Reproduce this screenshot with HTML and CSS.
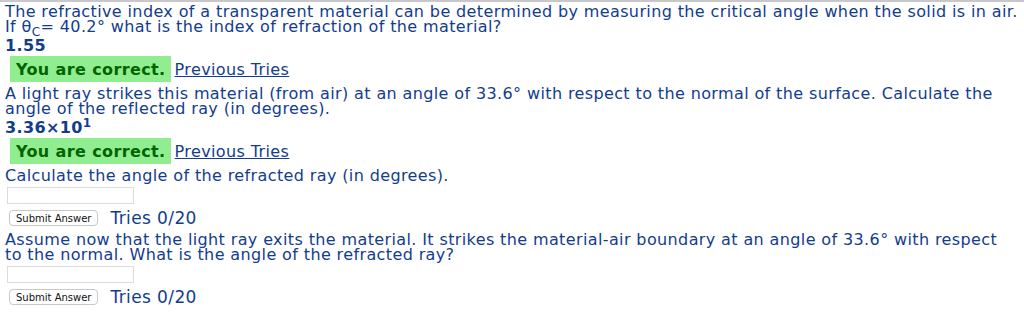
FILE: index.html
```html
<!DOCTYPE html>
<html lang="en">
<head>
    <meta charset="UTF-8">
    <title>Problem</title>
    <link rel="stylesheet" href="styles.css">
</head>
<body>

<div class="problem">
    <div class="part">
        <p class="question">The refractive index of a transparent material can be determined by measuring the critical angle when the solid is in air.<br>If &theta;<sub>C</sub>= 40.2&deg; what is the index of refraction of the material?</p>
        <div class="answer">1.55</div>
        <div class="status">
            <span class="correct">You are correct.</span>
            <a class="tries-link" href="#">Previous Tries</a>
        </div>
    </div>

    <div class="part">
        <p class="question">A light ray strikes this material (from air) at an angle of 33.6&deg; with respect to the normal of the surface. Calculate the angle of the reflected ray (in degrees).</p>
        <div class="answer">3.36&times;10<sup>1</sup></div>
        <div class="status">
            <span class="correct">You are correct.</span>
            <a class="tries-link" href="#">Previous Tries</a>
        </div>
    </div>

    <div class="part">
        <p class="question">Calculate the angle of the refracted ray (in degrees).</p>
        <input class="field" type="text">
        <div class="submit-row">
            <button class="submit">Submit Answer</button>
            <span class="tries">Tries 0/20</span>
        </div>
    </div>

    <div class="part">
        <p class="question">Assume now that the light ray exits the material. It strikes the material-air boundary at an angle of 33.6&deg; with respect to the normal. What is the angle of the refracted ray?</p>
        <input class="field" type="text">
        <div class="submit-row">
            <button class="submit">Submit Answer</button>
            <span class="tries">Tries 0/20</span>
        </div>
    </div>
</div>

</body>
</html>
```

FILE: styles.css
```css
body {
    margin: 0;
    background-color: #fff;
    font-family: "DejaVu Sans", Verdana, sans-serif;
    letter-spacing: 0.38px;
    color: #123c8e;
}
.problem {
    border-top: 2px solid #c8c8cc;
    padding: 0 5px 0 5px;
}
.question {
    margin: 0;
    font-size: 16px;
    line-height: 15px;
    padding-top: 2px;
}
.question sub {
    font-size: 12px;
    line-height: 0;
}
.answer {
    font-weight: bold;
    font-size: 16px;
    line-height: 18px;
    margin-top: 3px;
}
.answer sup {
    font-size: 12px;
    line-height: 0;
}
.status {
    display: flex;
    align-items: center;
    gap: 4px;
    margin: 1px 0 2px 5px;
    font-size: 16px;
}
.correct {
    background-color: #90ee90;
    color: #006400;
    font-weight: bold;
    padding: 4px 5px 3px 6px;
}
.tries-link {
    color: #123c8e;
}
.field {
    display: block;
    width: 127px;
    height: 17px;
    box-sizing: border-box;
    border: 1px solid #dcdcdc;
    margin: 4px 0 0 2px;
}
.submit-row {
    display: flex;
    align-items: center;
    gap: 12px;
    margin: 4px 0 2px 4px;
}
.submit {
    font-family: "DejaVu Sans", Verdana, sans-serif;
    letter-spacing: 0;
    font-size: 10px;
    color: #111;
    background-color: #fff;
    border: 1px solid #c8c8c8;
    border-radius: 4px;
    padding: 0 6px;
    height: 16px;
}
.tries {
    font-size: 17px;
}
```
